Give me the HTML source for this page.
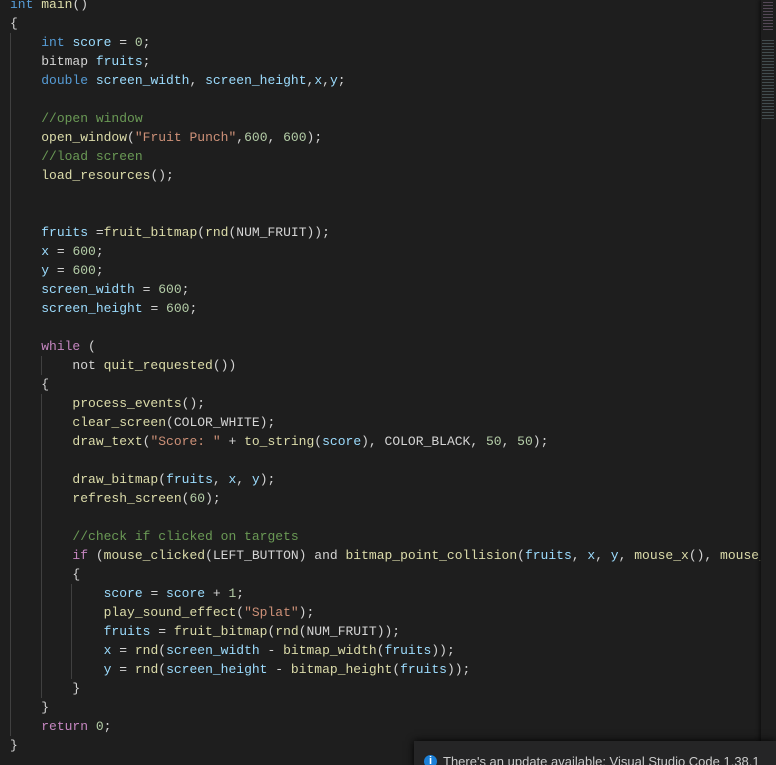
<!DOCTYPE html>
<html><head><style>
html,body{margin:0;padding:0;background:#1e1e1e;width:776px;height:765px;overflow:hidden;position:relative}
#code{position:absolute;left:10px;top:-5px;font-family:"Liberation Mono",monospace;font-size:13px;line-height:19px;color:#d4d4d4;white-space:pre}
.k{color:#569cd6}.p{color:#c586c0}.f{color:#dcdcaa}.v{color:#9cdcfe}.s{color:#ce9178}.n{color:#b5cea8}.c{color:#6a9955}
.g{position:absolute;width:1px;background:#404040}
#mm{position:absolute;left:761px;top:0;width:15px;height:765px;background:#1e1e1e;box-shadow:-2px 0 3px #111}
#note{position:absolute;left:414px;top:741px;width:362px;height:30px;background:#252526;box-shadow:0 0 8px #000;font-family:"Liberation Sans",sans-serif;font-size:13px;color:#cccccc}
#ic{position:absolute;left:10px;top:14px;width:13px;height:13px;border-radius:50%;background:#1b80d8;color:#fff;font-size:11px;font-weight:bold;text-align:center;line-height:13px}
</style></head><body>
<div class="g" style="left:10px;top:33px;height:703px"></div>
<div class="g" style="left:41px;top:356px;height:19px"></div>
<div class="g" style="left:41px;top:394px;height:304px"></div>
<div class="g" style="left:71px;top:584px;height:95px"></div>
<div id="code"><span class="k">int</span> <span class="f">main</span>()
{
    <span class="k">int</span> <span class="v">score</span> = <span class="n">0</span>;
    bitmap <span class="v">fruits</span>;
    <span class="k">double</span> <span class="v">screen_width</span>, <span class="v">screen_height</span>,<span class="v">x</span>,<span class="v">y</span>;

    <span class="c">//open window</span>
    <span class="f">open_window</span>(<span class="s">"Fruit Punch"</span>,<span class="n">600</span>, <span class="n">600</span>);
    <span class="c">//load screen</span>
    <span class="f">load_resources</span>();


    <span class="v">fruits</span> =<span class="f">fruit_bitmap</span>(<span class="f">rnd</span>(NUM_FRUIT));
    <span class="v">x</span> = <span class="n">600</span>;
    <span class="v">y</span> = <span class="n">600</span>;
    <span class="v">screen_width</span> = <span class="n">600</span>;
    <span class="v">screen_height</span> = <span class="n">600</span>;

    <span class="p">while</span> (
        not <span class="f">quit_requested</span>())
    {
        <span class="f">process_events</span>();
        <span class="f">clear_screen</span>(COLOR_WHITE);
        <span class="f">draw_text</span>(<span class="s">"Score: "</span> + <span class="f">to_string</span>(<span class="v">score</span>), COLOR_BLACK, <span class="n">50</span>, <span class="n">50</span>);

        <span class="f">draw_bitmap</span>(<span class="v">fruits</span>, <span class="v">x</span>, <span class="v">y</span>);
        <span class="f">refresh_screen</span>(<span class="n">60</span>);

        <span class="c">//check if clicked on targets</span>
        <span class="p">if</span> (<span class="f">mouse_clicked</span>(LEFT_BUTTON) and <span class="f">bitmap_point_collision</span>(<span class="v">fruits</span>, <span class="v">x</span>, <span class="v">y</span>, <span class="f">mouse_x</span>(), <span class="f">mouse_y</span>()))
        {
            <span class="v">score</span> = <span class="v">score</span> + <span class="n">1</span>;
            <span class="f">play_sound_effect</span>(<span class="s">"Splat"</span>);
            <span class="v">fruits</span> = <span class="f">fruit_bitmap</span>(<span class="f">rnd</span>(NUM_FRUIT));
            <span class="v">x</span> = <span class="f">rnd</span>(<span class="v">screen_width</span> - <span class="f">bitmap_width</span>(<span class="v">fruits</span>));
            <span class="v">y</span> = <span class="f">rnd</span>(<span class="v">screen_height</span> - <span class="f">bitmap_height</span>(<span class="v">fruits</span>));
        }
    }
    <span class="p">return</span> <span class="n">0</span>;
}</div>
<div id="mm">
<div style="position:absolute;left:2px;top:2px;width:10px;height:30px;background:repeating-linear-gradient(#6b5a6e 0 1px,transparent 1px 3px);opacity:.7"></div>
<div style="position:absolute;left:1px;top:40px;width:12px;height:80px;background:repeating-linear-gradient(#5a6a70 0 1px,transparent 1px 3px);opacity:.6"></div>
</div>
<div id="note"><div id="ic">i</div><div style="position:absolute;left:29px;top:13px">There's an update available: Visual Studio Code 1.38.1</div></div>
</body></html>
